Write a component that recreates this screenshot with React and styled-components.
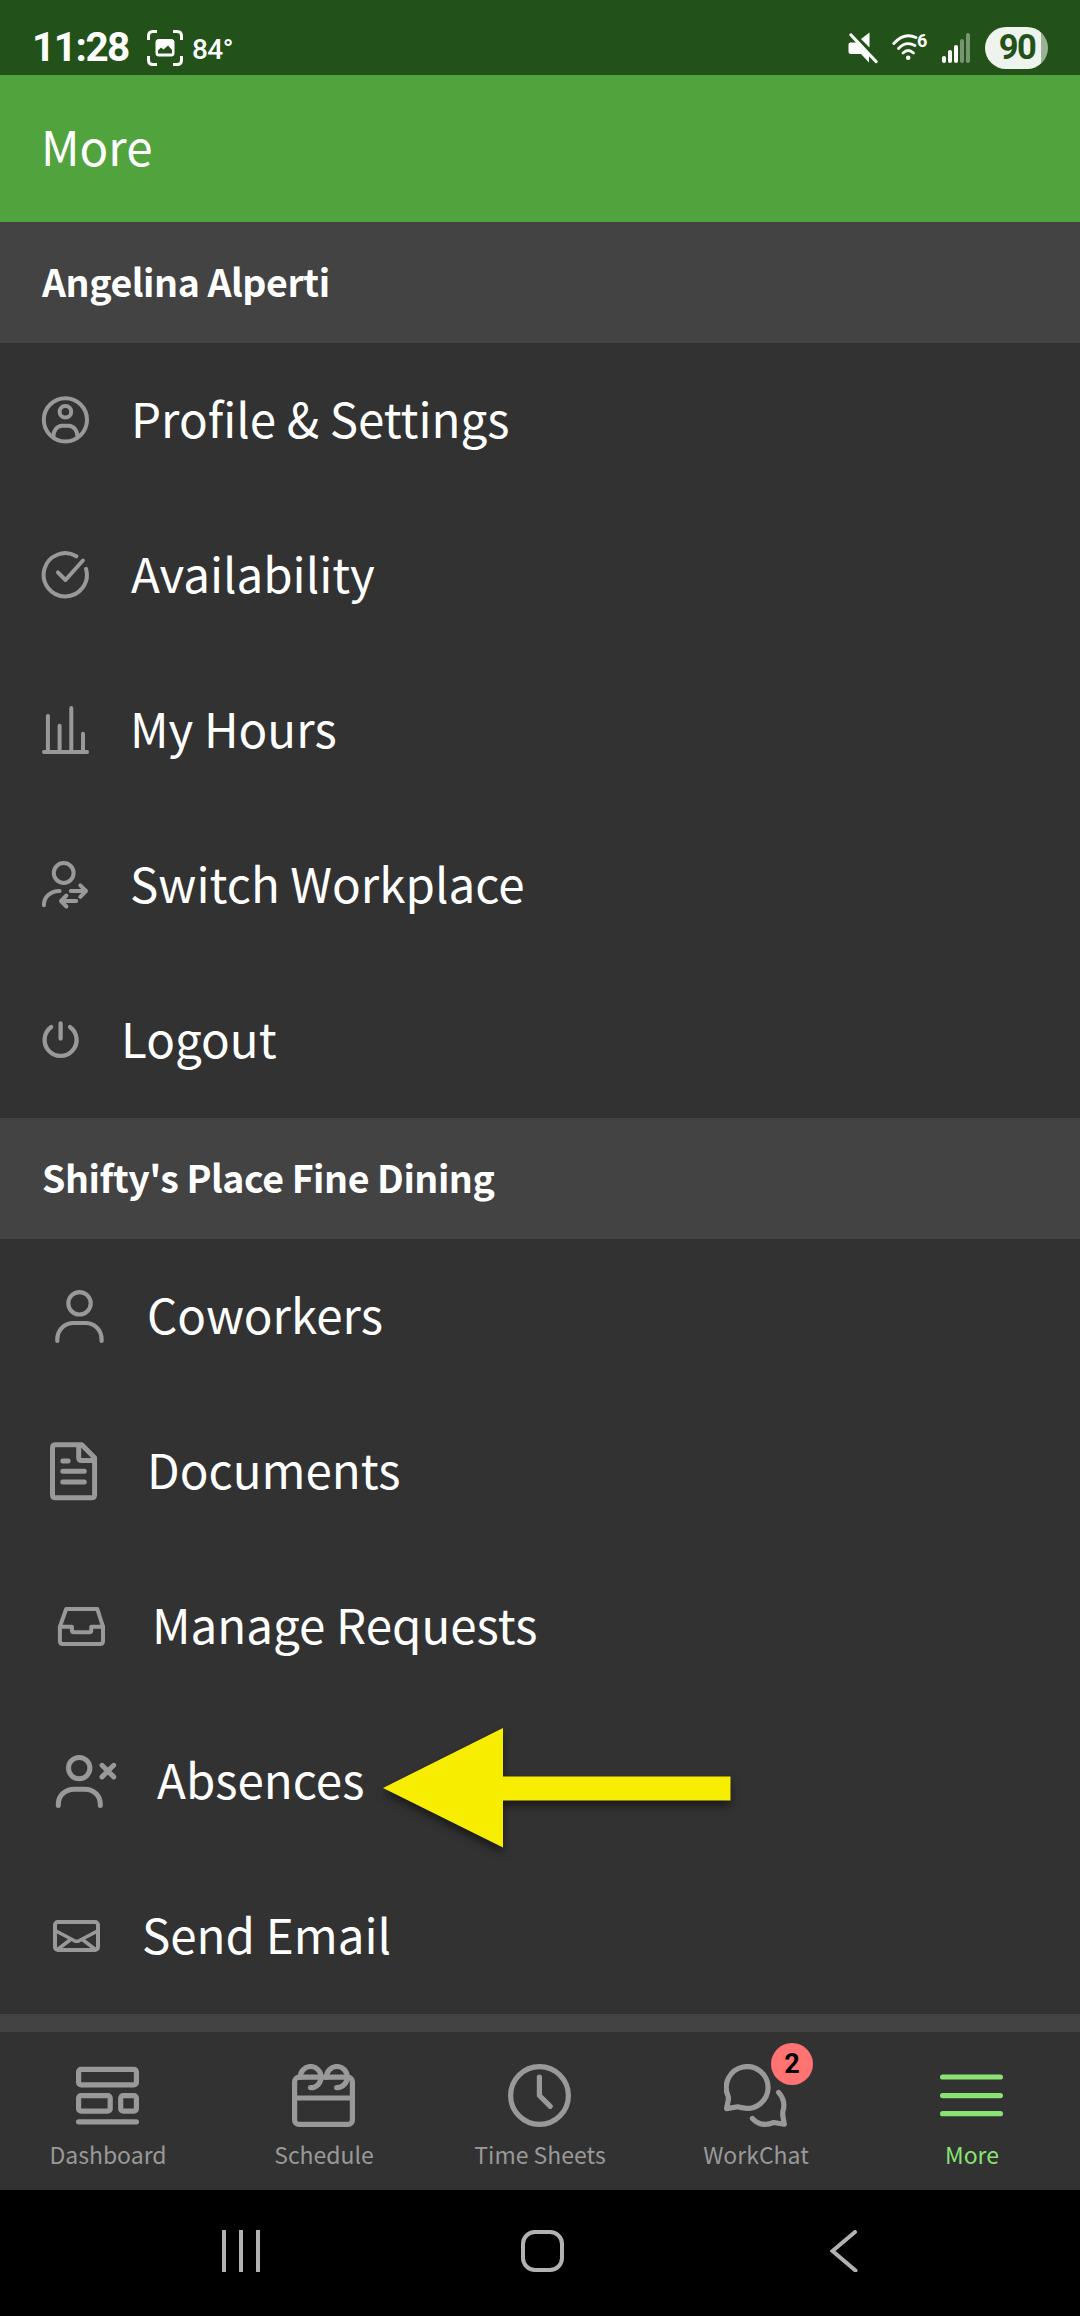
import styled, { createGlobalStyle } from 'styled-components';

const GlobalStyle = createGlobalStyle`
  * {
    box-sizing: border-box;
  }
  body {
    margin: 0;
    background: #000000;
    color: #ffffff;
    font-family: "Noto Sans CJK SC", "Noto Sans", sans-serif;
  }
  svg {
    display: block;
    flex: none;
  }
`;

const icons = {
    profile: (
        <>
            <circle cx="25.4" cy="29.8" r="21.6" />
            <circle cx="25.4" cy="21.8" r="5.8" />
            <path d="M13.5 46.3A9 10 0 0 1 22 35.8H28.8A9 10 0 0 1 37.3 46.3" />
        </>
    ),
    availability: (
        <>
            <path d="M36.4 11.3A21.6 21.6 0 1 0 46 23.8" />
            <path d="M17.9 27.4L25.5 35L42.9 15.5" />
        </>
    ),
    hours: <path d="M4 52H47M7.9 51V16M19.6 51V25.7M31.3 51V8M43 51V33.7" />,
    workplace: (
        <>
            <circle cx="23.7" cy="18" r="9.9" />
            <path d="M3.9 50.3C3.9 41.5 11 36 19.6 36" />
            <path d="M30.8 36H46M40.3 30.4L46 36L40.3 41.8" />
            <path d="M36.2 46H21M26.4 40.5L21 46L26.4 51.5" />
        </>
    ),
    logout: <path d="M20.6 13.3V28.5M11.2 17A16 16 0 1 0 30 17" />,
    coworkers: (
        <>
            <circle cx="39.5" cy="17.3" r="11.2" />
            <path d="M17.3 54.9V53.5C17.3 43.5 25 37 33.5 37H45.5C54 37 61.6 43.5 61.6 53.5V54.9" />
        </>
    ),
    documents: (
        <>
            <path d="M15.5 3.8H41.8L54.6 16.8V53.8Q54.6 56.8 51.6 56.8H15.5Q12.5 56.8 12.5 53.8V6.8Q12.5 3.8 15.5 3.8Z" />
            <path d="M38.7 4.4V16.6Q38.7 19.6 41.7 19.6H54" />
            <path d="M22.8 20H28.1M22.8 30.3H44.3M22.8 40.9H44.3" />
        </>
    ),
    requests: (
        <>
            <path d="M26.2 13H57.3L63 30.7V45Q63 48 60 48H22.9Q19.9 48 19.9 45V30.7Z" />
            <path d="M20 30.7H31.9V34.3Q31.9 36.3 33.9 36.3H49.3Q51.3 36.3 51.3 34.3V30.7H63" />
        </>
    ),
    absences: (
        <>
            <circle cx="39.2" cy="17.1" r="10.7" />
            <path d="M18.3 54.4V52.9C18.3 44.4 25.5 38.2 34 38.2H44.8C53.3 38.2 60.3 44.4 60.3 52.9V54.4" />
            <path d="M62 14.3L73.7 25.9M73.7 14.3L62 25.9" />
        </>
    ),
    email: (
        <>
            <rect x="15" y="16" width="43" height="28" rx="3" />
            <path d="M16 25L34.5 34.8Q36.8 35.8 39 34.8L57.5 25" strokeWidth="3.500" />
            <path d="M17.5 43.5L30 34M55.5 43.5L43 34" strokeWidth="3.500" />
        </>
    ),
};

const accountItems = [
    { icon: 'profile', label: 'Profile & Settings', left: 131 },
    { icon: 'availability', label: 'Availability', left: 131 },
    { icon: 'hours', label: 'My Hours', left: 130 },
    { icon: 'workplace', label: 'Switch Workplace', left: 130 },
    { icon: 'logout', label: 'Logout', left: 121, stroke: 4.3 },
];

const workplaceItems = [
    { icon: 'coworkers', label: 'Coworkers', left: 147, stroke: 4.2 },
    { icon: 'documents', label: 'Documents', left: 147, stroke: 5 },
    { icon: 'requests', label: 'Manage Requests', left: 152 },
    { icon: 'absences', label: 'Absences', left: 157, stroke: 5, arrow: true },
    { icon: 'email', label: 'Send Email', left: 142 },
];

const tabs = [
    {
        label: 'Dashboard',
        icon: (
            <>
                <rect x="2.6" y="5.3" width="57.8" height="15.6" rx="2.5" />
                <rect x="2.6" y="31.6" width="31.6" height="15.6" rx="2.5" />
                <rect x="44.7" y="31.6" width="15.7" height="15.6" rx="2.5" />
                <path d="M2.6 57.8H60.4" />
            </>
        ),
    },
    {
        label: 'Schedule',
        icon: (
            <>
                <rect x="2.6" y="13.2" width="57.8" height="47.2" rx="4.5" />
                <path d="M3 34H60" />
                <path d="M8.3 13.2A10.4 10.6 0 1 1 18.4 23.7" />
                <path d="M34.5 13.2A10.4 10.6 0 1 1 44.7 23.7" />
            </>
        ),
    },
    {
        label: 'Time Sheets',
        icon: (
            <>
                <circle cx="31.5" cy="31.5" r="28.9" />
                <path d="M31.4 13.2V31.5L42.3 42.3" />
            </>
        ),
    },
    {
        label: 'WorkChat',
        badge: '2',
        icon: (
            <>
                <path d="M4.3 32.5A20.9 20.9 0 1 1 17.5 43.6L13.8 42.8L2.6 44.6L4.4 35.5Z" />
                <path d="M54.6 28.4C59.5 34 61.2 40.5 58.8 47.5L58.7 51L60.3 60.2L49.8 58.5C41.5 61.8 34 60.5 28.4 54.4" />
            </>
        ),
    },
    {
        label: 'More',
        active: true,
        icon: <path d="M2.6 13H60.4M2.6 31.6H60.4M2.6 49.7H60.4" />,
    },
];

const MenuList = ({ items }) => {
    return (
        <div>
            {items.map((item) => (
                <MenuRow key={item.label}>
                    <MenuIcon viewBox="0 0 80 60" $stroke={item.stroke}>
                        {icons[item.icon]}
                    </MenuIcon>
                    <MenuLabel $left={item.left}>{item.label}</MenuLabel>
                    {item.arrow && (
                        <Arrow viewBox="0 0 350 122">
                            <path d="M0 60L120 0V48.500H347.500V72.500H120V119.500Z" />
                        </Arrow>
                    )}
                </MenuRow>
            ))}
        </div>
    );
};

const App = () => {
    return (
        <Screen>
            <GlobalStyle />
            <StatusBar>
                <Clock>11:28</Clock>
                <Capture viewBox="0 0 36 36">
                    <path d="M1.500 10V6Q1.500 1.500 6 1.500H10M26 1.500H30Q34.500 1.500 34.500 6V10M34.500 26V30Q34.500 34.500 30 34.500H26M10 34.500H6Q1.500 34.500 1.500 30V26" fill="none" stroke="#ffffff" strokeWidth="3" />
                    <path fillRule="evenodd" d="M12 9H24Q27.500 9 27.500 12.500V23Q27.500 26.500 24 26.500H12Q8.500 26.500 8.500 23V12.500Q8.500 9 12 9ZM11 23.500H25V20L21 15.500L16.500 19.500L14 17.500L11 20.500Z" fill="#ffffff" />
                </Capture>
                <Temperature>84°</Temperature>
                <StatusIcons>
                    <svg width="30" height="32" viewBox="0 0 30 32">
                        <path d="M2.500 10.500H8L21 23.500V30.500L13 22H3Q0.500 22 0.500 19.500V12.500Q0.500 10.500 2.500 10.500ZM13 7L21.500 0.500V15.500Z" fill="#ffffff" />
                        <path d="M5 1L30 27.500" stroke="#225219" strokeWidth="2.500" />
                        <path d="M3 3L28 29.500" stroke="#ffffff" strokeWidth="3.200" strokeLinecap="round" />
                    </svg>
                    <Wifi>
                        <svg width="36" height="28" viewBox="0 0 36 28">
                            <g fill="none" stroke="#ffffff" strokeWidth="2.800" strokeLinecap="round">
                                <path d="M1.800 9.500Q12 -2 24 3.500" />
                                <path d="M6.500 14.500Q14 6.500 23 11.500" />
                                <path d="M11 19Q16 14 21.500 19" />
                            </g>
                            <circle cx="16.200" cy="23.700" r="2.300" fill="#ffffff" />
                        </svg>
                        <WifiBand>6</WifiBand>
                    </Wifi>
                    <Signal>
                        <Bar $height={7} />
                        <Bar $height={13} />
                        <Bar $height={18} />
                        <Bar $height={24} $dim />
                        <Bar $height={30} $dim />
                    </Signal>
                    <Battery>90</Battery>
                </StatusIcons>
            </StatusBar>
            <Header>More</Header>
            <SectionTitle>Angelina Alperti</SectionTitle>
            <MenuList items={accountItems} />
            <SectionTitle>Shifty's Place Fine Dining</SectionTitle>
            <MenuList items={workplaceItems} />
            <NextSection />
            <TabBar>
                {tabs.map((tab) => (
                    <Tab key={tab.label} $active={tab.active}>
                        <TabIcon viewBox="0 0 63 63">{tab.icon}</TabIcon>
                        <span>{tab.label}</span>
                        {tab.badge && <Badge>{tab.badge}</Badge>}
                    </Tab>
                ))}
            </TabBar>
            <SystemNav>
                <svg width="40" height="42" viewBox="0 0 40 42">
                    <path d="M2 1V41M19 1V41M36 1V41" />
                </svg>
                <svg width="44" height="42" viewBox="0 0 44 42">
                    <rect x="2" y="2" width="39" height="38" rx="12" />
                </svg>
                <svg width="28" height="42" viewBox="0 0 28 42">
                    <path d="M25 2L2.500 21L25.500 40.500" />
                </svg>
            </SystemNav>
        </Screen>
    );
};

const Screen = styled.div`
  width: 1080px;
  height: 2316px;
  overflow: hidden;
  background: #323232;
`;

const StatusBar = styled.div`
  display: flex;
  align-items: center;
  height: 75px;
  padding: 21px 32px 0 32px;
  background: #225219;
  font-family: Roboto, sans-serif;
`;

const Clock = styled.div`
  width: 115px;
  font-size: 40.5px;
  font-weight: 700;
  letter-spacing: -1.5px;
  line-height: 52px;
  padding-bottom: 2px;
`;

const Capture = styled.svg`
  width: 36px;
  height: 36px;
`;

const Temperature = styled.div`
  margin-left: 9px;
  font-size: 28px;
  font-weight: 500;
  letter-spacing: -0.6px;
  line-height: 50px;
  padding-top: 3px;
`;

const StatusIcons = styled.div`
  display: flex;
  align-items: center;
  margin-left: auto;
`;

const Wifi = styled.div`
  position: relative;
  margin-left: 14px;
`;

const WifiBand = styled.span`
  position: absolute;
  top: -4px;
  left: 25px;
  font-size: 18px;
  font-weight: 700;
  line-height: 21px;
`;

const Signal = styled.div`
  display: flex;
  align-items: flex-end;
  gap: 2px;
  margin-left: 14px;
`;

const Bar = styled.div`
  width: 4px;
  height: ${({ $height }) => $height}px;
  border-radius: 2px;
  background: ${({ $dim }) => ($dim ? '#75966f' : '#ffffff')};
`;

const Battery = styled.div`
  width: 63px;
  height: 42px;
  margin-left: 15px;
  border-radius: 21px;
  background: linear-gradient(90deg, #eef3ed 56px, #9db098 56px);
  color: #225219;
  font-size: 34.5px;
  font-weight: 700;
  letter-spacing: -1.5px;
  line-height: 40px;
  text-align: center;
  padding-left: 1px;
`;

const Header = styled.div`
  height: 147px;
  padding-left: 41px;
  background: #51a33d;
  font-size: 47.5px;
  line-height: 141px;
`;

const SectionTitle = styled.div`
  height: 121px;
  padding-left: 42px;
  background: #434343;
  font-size: 37.5px;
  font-weight: 700;
  letter-spacing: -0.45px;
  font-variant-ligatures: common-ligatures;
  line-height: 117px;
`;

const MenuRow = styled.div`
  position: relative;
  display: flex;
  align-items: center;
  height: 155px;
  padding: 0 0 1px 40px;
`;

const MenuIcon = styled.svg`
  width: 80px;
  height: 60px;
  fill: none;
  stroke: #999999;
  stroke-width: ${({ $stroke }) => $stroke || 4};
  stroke-linecap: round;
  stroke-linejoin: round;
`;

const MenuLabel = styled.div`
  margin-left: ${({ $left }) => $left - 120}px;
  padding-bottom: 4px;
  font-size: 47.5px;
  line-height: 70px;
`;

/* callout laid over the row, pointing at its label */
const Arrow = styled.svg`
  position: absolute;
  top: 24px;
  left: 383px;
  width: 350px;
  height: 122px;
  overflow: visible;
  fill: #f7ed00;
  filter: drop-shadow(0 5px 4px rgba(0, 0, 0, 0.5));
`;

const NextSection = styled.div`
  height: 18px;
  background: #434343;
`;

const TabBar = styled.div`
  display: grid;
  grid-template-columns: repeat(5, 216px);
  height: 158px;
`;

const Tab = styled.div`
  position: relative;
  display: flex;
  flex-direction: column;
  align-items: center;
  padding-top: 32px;
  color: ${({ $active }) => ($active ? '#89e373' : '#999999')};
  font-size: 23px;
  line-height: 36px;
  span {
    margin-top: 9px;
  }
`;

const TabIcon = styled.svg`
  width: 63px;
  height: 63px;
  margin-right: 1px;
  fill: none;
  stroke: currentColor;
  stroke-width: 5.2;
  stroke-linecap: round;
  stroke-linejoin: round;
`;

const Badge = styled.div`
  position: absolute;
  top: 11px;
  left: 123px;
  width: 42px;
  height: 42px;
  border-radius: 50%;
  background: #ff7473;
  color: #000000;
  font-family: Roboto, sans-serif;
  font-size: 27px;
  font-weight: 700;
  line-height: 43px;
  text-align: center;
`;

const SystemNav = styled.div`
  display: grid;
  grid-template-columns: 299px 309px 28px;
  height: 126px;
  padding: 40px 0 0 222px;
  background: #000000;
  svg {
    fill: none;
    stroke: #b2b2b2;
    stroke-width: 4;
    stroke-linecap: round;
  }
`;

export default App;
